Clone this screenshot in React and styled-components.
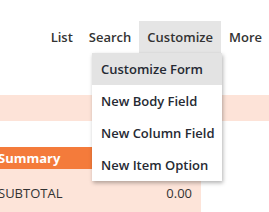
import React from "react";
import styled, { createGlobalStyle } from "styled-components";

const GlobalStyle = createGlobalStyle`
  html, body {
    margin: 0;
    padding: 0;
    background: #fff;
    overflow: hidden;
  }
  body {
    font-family: "Open Sans", "Liberation Sans", sans-serif;
    color: #333;
  }
`;

const menuItems = [
  "Customize Form",
  "New Body Field",
  "New Column Field",
  "New Item Option",
];

export default function App() {
  return (
    <Page>
      <GlobalStyle />
      <Nav>
        <NavItem>List</NavItem>
        <NavItem>Search</NavItem>
        <NavItem $active>
          Customize
          <Dropdown>
            {menuItems.map((item, i) => (
              <MenuItem key={item} $hover={i === 0}>
                {item}
              </MenuItem>
            ))}
          </Dropdown>
        </NavItem>
        <NavItem>More</NavItem>
      </Nav>
      <Band />
      <Summary>
        <SummaryHead>Summary</SummaryHead>
        <SummaryRow>
          <span>SUBTOTAL</span>
          <span>0.00</span>
        </SummaryRow>
      </Summary>
    </Page>
  );
}

const Page = styled.div`
  width: 269px;
  height: 212px;
  overflow: hidden;
`;

const Nav = styled.div`
  display: flex;
  justify-content: flex-end;
  padding-top: 21px;
  margin-right: -1px;
`;

const NavItem = styled.div`
  position: relative;
  height: 32px;
  line-height: 32px;
  padding: 0 8px;
  font-size: 13px;
  font-weight: 600;
  color: #333;
  background: ${(p) => (p.$active ? "#e5e5e5" : "transparent")};
  z-index: ${(p) => (p.$active ? 5 : 1)};
`;

const Dropdown = styled.div`
  position: absolute;
  top: 100%;
  right: -1px;
  width: 130px;
  background: #fff;
  box-shadow: 1px 2px 4px rgba(0, 0, 0, 0.3);
  display: flex;
  flex-direction: column;
`;

const MenuItem = styled.div`
  height: 32px;
  line-height: 32px;
  padding: 0 9px;
  font-size: 13px;
  font-weight: 600;
  color: #262a33;
  white-space: nowrap;
  background: ${(p) => (p.$hover ? "#e3e3e3" : "#fff")};
`;

const Band = styled.div`
  margin-top: 42px;
  height: 26px;
  background: #fde3d8;
`;

const Summary = styled.div`
  margin-top: 26px;
  margin-left: -2px;
  width: 203px;
`;

const SummaryHead = styled.div`
  height: 22px;
  line-height: 22px;
  background: #f47b3b;
  color: #fff;
  font-size: 13px;
  font-weight: 700;
`;

const SummaryRow = styled.div`
  display: flex;
  justify-content: space-between;
  align-items: center;
  height: 48px;
  padding: 0 9px 12px 0;
  background: #fde4d9;
  font-size: 13px;
  color: #333;
`;
